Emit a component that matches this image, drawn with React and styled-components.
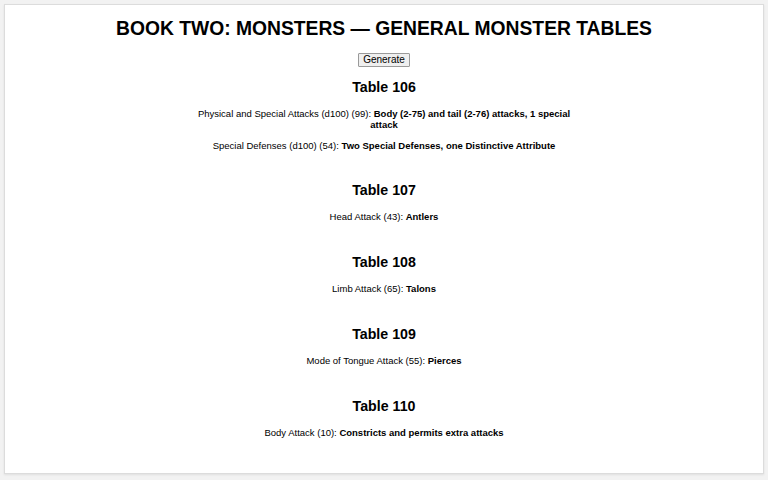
import React from "react";
import styled, { createGlobalStyle } from "styled-components";

const Global = createGlobalStyle`
  html, body { margin: 0; padding: 0; }
  body {
    background: #f2f2f2;
    font-family: "Liberation Sans", Arial, sans-serif;
    color: #000;
  }
`;

const Card = styled.main`
  margin: 4px;
  background: #fff;
  border: 1px solid #dcdcdc;
  box-shadow: 0 1px 2px rgba(0,0,0,0.08);
  padding: 12px 20px 35px;
  display: flex;
  flex-direction: column;
  align-items: center;
  text-align: center;
`;

const Title = styled.h1`
  margin: 0;
  font-size: 19.3px;
  line-height: 23px;
  font-weight: bold;
`;

const Button = styled.button`
  margin-top: 13px;
  font-family: "Liberation Sans", Arial, sans-serif;
  font-size: 10px;
  line-height: 12px;
  padding: 0 4px;
  height: 14px;
  background: #efefef;
  border: 1px solid #9a9a9a;
  border-radius: 1px;
  color: #000;
`;

const Sections = styled.div`
  margin-top: 12px;
  display: flex;
  flex-direction: column;
  align-items: center;
  gap: 31.5px;
  width: 100%;
`;

const Section = styled.section`
  display: flex;
  flex-direction: column;
  align-items: center;
  max-width: 380px;
`;

const Heading = styled.h2`
  margin: 0 0 12px;
  font-size: 14.2px;
  line-height: 17px;
  font-weight: bold;
`;

const Line = styled.p`
  margin: 0;
  font-size: 9.5px;
  line-height: 11.3px;
  & + & { margin-top: 9px; }
  b { font-weight: bold; }
`;

const tables = [
  {
    n: 106,
    rows: [
      ["Physical and Special Attacks (d100) (99)", "Body (2-75) and tail (2-76) attacks, 1 special attack"],
      ["Special Defenses (d100) (54)", "Two Special Defenses, one Distinctive Attribute"],
    ],
  },
  { n: 107, rows: [["Head Attack (43)", "Antlers"]] },
  { n: 108, rows: [["Limb Attack (65)", "Talons"]] },
  { n: 109, rows: [["Mode of Tongue Attack (55)", "Pierces"]] },
  { n: 110, rows: [["Body Attack (10)", "Constricts and permits extra attacks"]] },
];

export default function App() {
  return (
    <>
      <Global />
      <Card>
        <Title>BOOK TWO: MONSTERS — GENERAL MONSTER TABLES</Title>
        <Button type="button">Generate</Button>
        <Sections>
          {tables.map((t) => (
            <Section key={t.n}>
              <Heading>Table {t.n}</Heading>
              {t.rows.map(([k, v]) => (
                <Line key={k}>
                  {k}: <b>{v}</b>
                </Line>
              ))}
            </Section>
          ))}
        </Sections>
      </Card>
    </>
  );
}
